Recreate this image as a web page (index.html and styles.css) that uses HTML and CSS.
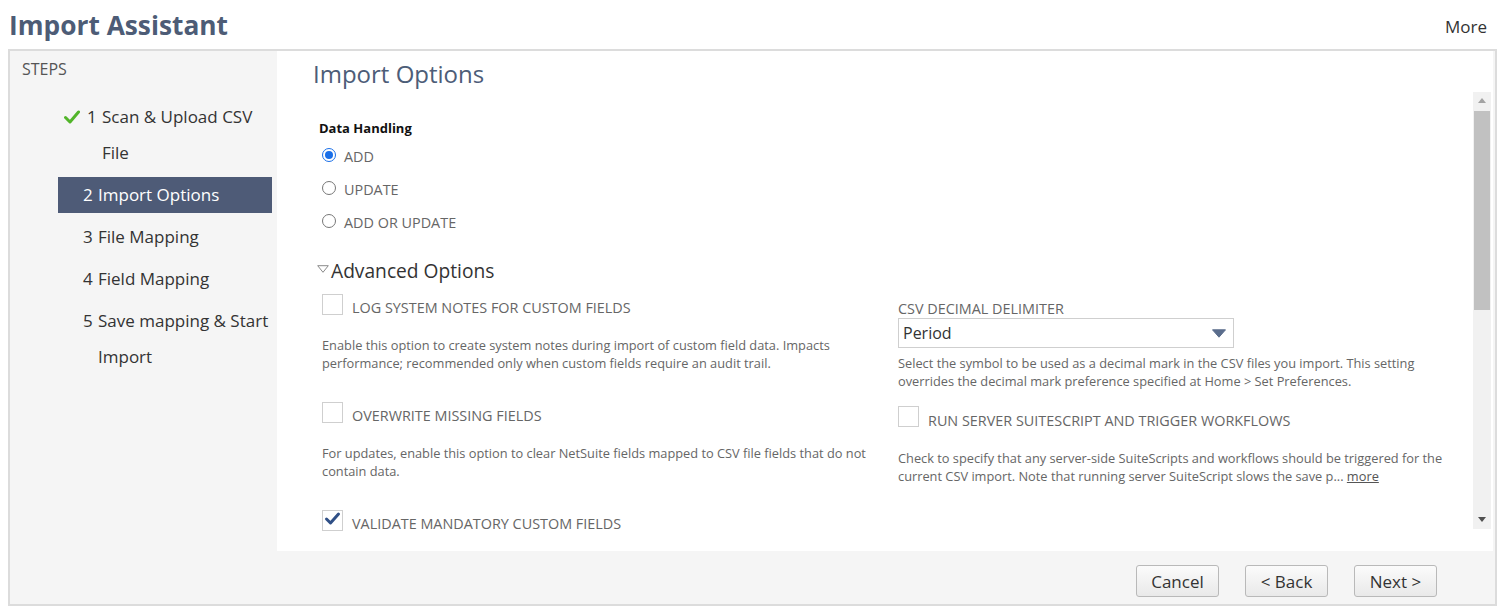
FILE: index.html
```html
<!DOCTYPE html>
<html>
<head>
<meta charset="utf-8">
<title>Import Assistant</title>
<link rel="stylesheet" href="styles.css">
</head>
<body>
<header class="top">
  <h1 class="title">Import Assistant</h1>
  <a class="more-top">More</a>
</header>
<div class="box">
  <div class="body-row">
    <aside class="sidebar">
      <div class="steps-label">STEPS</div>
      <ul class="steps">
        <li class="step done">
          <svg class="check" viewBox="0 0 16 14" width="16" height="14"><path d="M1.5 7.5 L6 12 L14.5 2" fill="none" stroke="#52b52a" stroke-width="3" stroke-linecap="round" stroke-linejoin="round"/></svg>
          <span class="num">1</span><span class="txt">Scan &amp; Upload CSV File</span>
        </li>
        <li class="step active"><span class="num">2</span><span class="txt">Import Options</span></li>
        <li class="step"><span class="num">3</span><span class="txt">File Mapping</span></li>
        <li class="step"><span class="num">4</span><span class="txt">Field Mapping</span></li>
        <li class="step"><span class="num">5</span><span class="txt">Save mapping &amp; Start Import</span></li>
      </ul>
    </aside>
    <main class="main">
      <h2 class="page-title">Import Options</h2>
      <div class="scroll-wrap">
        <div class="scroll-content">
          <div class="dh-label">Data Handling</div>
          <div class="radio-row"><span class="radio on"></span><span class="radio-label">ADD</span></div>
          <div class="radio-row"><span class="radio"></span><span class="radio-label">UPDATE</span></div>
          <div class="radio-row"><span class="radio"></span><span class="radio-label">ADD OR UPDATE</span></div>

          <div class="adv-head">
            <svg class="tri" viewBox="0 0 12 8" width="12" height="8"><path d="M0.7 0.7 L11.3 0.7 L6 7.3 Z" fill="none" stroke="#8a8a8a" stroke-width="1"/></svg>
            <span>Advanced Options</span>
          </div>

          <div class="cols">
            <div class="col">
              <div class="field">
                <div class="cb-row"><span class="cb"></span><span class="cb-label">LOG SYSTEM NOTES FOR CUSTOM FIELDS</span></div>
                <p class="help">Enable this option to create system notes during import of custom field data. Impacts performance; recommended only when custom fields require an audit trail.</p>
              </div>
              <div class="field">
                <div class="cb-row"><span class="cb"></span><span class="cb-label">OVERWRITE MISSING FIELDS</span></div>
                <p class="help">For updates, enable this option to clear NetSuite fields mapped to CSV file fields that do not contain data.</p>
              </div>
              <div class="field last">
                <div class="cb-row"><span class="cb checked"><svg viewBox="0 0 21 21" width="21" height="21"><path d="M4.5 9 L8.5 13 L16.5 4" fill="none" stroke="#2f4f86" stroke-width="3" stroke-linecap="round" stroke-linejoin="round"/></svg></span><span class="cb-label">VALIDATE MANDATORY CUSTOM FIELDS</span></div>
              </div>
            </div>
            <div class="col">
              <div class="sel-label">CSV DECIMAL DELIMITER</div>
              <div class="select"><span>Period</span><svg viewBox="0 0 14 9" width="14" height="9"><path d="M0.5 0.8 L13.5 0.8 L7 8.2 Z" fill="#5a6d8c" stroke="#5a6d8c" stroke-width="1" stroke-linejoin="round"/></svg></div>
              <p class="help help-sel">Select the symbol to be used as a decimal mark in the CSV files you import. This setting overrides the decimal mark preference specified at Home &gt; Set Preferences.</p>
              <div class="field field-run">
                <div class="cb-row"><span class="cb"></span><span class="cb-label">RUN SERVER SUITESCRIPT AND TRIGGER WORKFLOWS</span></div>
                <p class="help">Check to specify that any server-side SuiteScripts and workflows should be triggered for the current CSV import. Note that running server SuiteScript slows the save p...&nbsp;<a class="more-link">more</a></p>
              </div>
            </div>
          </div>
        </div>
        <div class="scrollbar">
          <span class="arrow up"></span>
          <span class="thumb"></span>
          <span class="track-rest"></span>
          <span class="arrow down"></span>
        </div>
      </div>
    </main>
  </div>
  <footer class="footer">
    <button class="btn">Cancel</button>
    <button class="btn">&lt; Back</button>
    <button class="btn">Next &gt;</button>
  </footer>
</div>
</body>
</html>
```

FILE: styles.css
```css
* { box-sizing: border-box; }
html, body { height: 100%; }
body {
  margin: 0;
  padding: 0 3px 0 8px;
  font-family: "Open Sans", "Liberation Sans", sans-serif;
  color: #333;
  background: #fff;
  overflow: hidden;
}
.top {
  height: 49px;
  display: flex;
  justify-content: space-between;
  align-items: center;
  padding: 0 10px 0 1px;
}
.title {
  margin: 0;
  font-size: 26.3px;
  font-weight: 700;
  color: #4d5c76;
  line-height: 36px;
}
.more-top {
  font-size: 17px;
  color: #333;
  padding-top: 3px;
}
.box {
  height: 557px;
  border: 2px solid #dcdcdc;
  background: #f5f5f5;
  display: flex;
  flex-direction: column;
}
.body-row {
  height: 500px;
  display: flex;
}
.sidebar {
  width: 267px;
  flex: none;
  padding: 7px 0 0 12px;
}
.steps-label {
  font-size: 16px;
  line-height: 22px;
  color: #555;
}
.steps {
  list-style: none;
  margin: 19px 0 0 36px;
  padding: 0;
  width: 214px;
}
.step {
  display: flex;
  align-items: flex-start;
  line-height: 36px;
  font-size: 17px;
  color: #333;
  padding-left: 25px;
  margin-bottom: 6px;
}
.step.done { padding-left: 6px; }
.step .check { margin: 11px 7px 0 0; flex: none; }
.step .num { width: 15px; flex: none; }
.step .txt { flex: 1; }
.step.active {
  background: #4e5b77;
  color: #fff;
}
.main {
  flex: 1;
  background: #fff;
  margin-right: 2px;
  padding-top: 6px;
  display: flex;
  flex-direction: column;
}
.page-title {
  margin: 0 0 0 36px;
  font-size: 24px;
  font-weight: 400;
  line-height: 33px;
  color: #4d5d78;
}
.scroll-wrap {
  height: 441px;
  display: flex;
}
.scroll-content {
  flex: 1;
  padding: 29px 0 0 45px;
}
.dh-label {
  margin-left: -3px;
  font-size: 13px;
  font-weight: 700;
  line-height: 18px;
  color: #111;
  margin-bottom: 3px;
}
.radio-row {
  display: flex;
  align-items: center;
  height: 33px;
}
.radio {
  width: 14px;
  height: 14px;
  border: 1.5px solid #777;
  border-radius: 50%;
  margin-right: 8px;
  margin-top: -3px;
  position: relative;
  background: #fff;
}
.radio.on { border-color: #1a6fe8; }
.radio.on::after {
  content: "";
  position: absolute;
  left: 1.5px;
  top: 1.5px;
  width: 8px;
  height: 8px;
  border-radius: 50%;
  background: #1a6fe8;
}
.radio-label {
  font-size: 14.4px;
  color: #666;
}
.adv-head {
  display: flex;
  align-items: center;
  margin: 18px 0 0 -5px;
  height: 27px;
  font-size: 19.2px;
  color: #333;
}
.adv-head .tri { margin: -4px 2px 0 0; }
.cols {
  display: grid;
  grid-template-columns: 550px 550px;
  column-gap: 26px;
  margin-top: 10px;
}
.field { margin-bottom: 30px; }
.field.last { margin-bottom: 0; }
.cb-row {
  display: flex;
  align-items: flex-start;
}
.cb {
  width: 21px;
  height: 21px;
  border: 1px solid #cfcfcf;
  background: #fff;
  flex: none;
  margin-right: 9px;
  position: relative;
}
.cb svg { position: absolute; left: -1px; top: -1px; }
.cb-label {
  font-size: 14.4px;
  line-height: 20px;
  margin-top: 4px;
  color: #666;
}
.help {
  margin: 18px 0 0;
  font-size: 12.8px;
  line-height: 18px;
  color: #666;
}
.sel-label {
  font-size: 14.4px;
  line-height: 18px;
  color: #666;
  margin-top: 6px;
}
.select {
  width: 336px;
  height: 30px;
  border: 1px solid #cfcfcf;
  display: flex;
  align-items: center;
  justify-content: space-between;
  padding: 0 7px 0 4px;
  font-size: 16px;
  color: #333;
}
.help-sel { margin-top: 6px; }
.field-run { margin-top: 16px; }
.field-run .cb-label { margin-top: 5px; }
.more-link {
  text-decoration: underline;
  color: #555;
}
.scrollbar {
  width: 18px;
  flex: none;
  margin-right: 2px;
  margin-top: 2px;
  margin-bottom: 2px;
  background: #f1f1f1;
  display: flex;
  flex-direction: column;
  align-items: center;
}
.arrow {
  width: 0;
  height: 0;
  border-left: 4.5px solid transparent;
  border-right: 4.5px solid transparent;
  margin: 6px 0;
}
.arrow.up { border-bottom: 5px solid #a3a3a3; }
.arrow.down { border-top: 5px solid #505050; margin-bottom: 7px; }
.thumb {
  width: 16px;
  height: 199px;
  background: #c1c1c1;
  margin-top: 2px;
}
.track-rest { flex: 1; }
.footer {
  height: 53px;
  display: flex;
  justify-content: flex-end;
  align-items: flex-start;
  padding: 14px 58px 0 0;
  gap: 26px;
}
.btn {
  width: 83px;
  height: 32px;
  border: 1px solid #b9b9b9;
  border-radius: 3px;
  background: linear-gradient(#fbfbfb, #e9e9e9);
  font-family: "Open Sans", "Liberation Sans", sans-serif;
  font-size: 17px;
  color: #333;
  padding: 0;
}
```
